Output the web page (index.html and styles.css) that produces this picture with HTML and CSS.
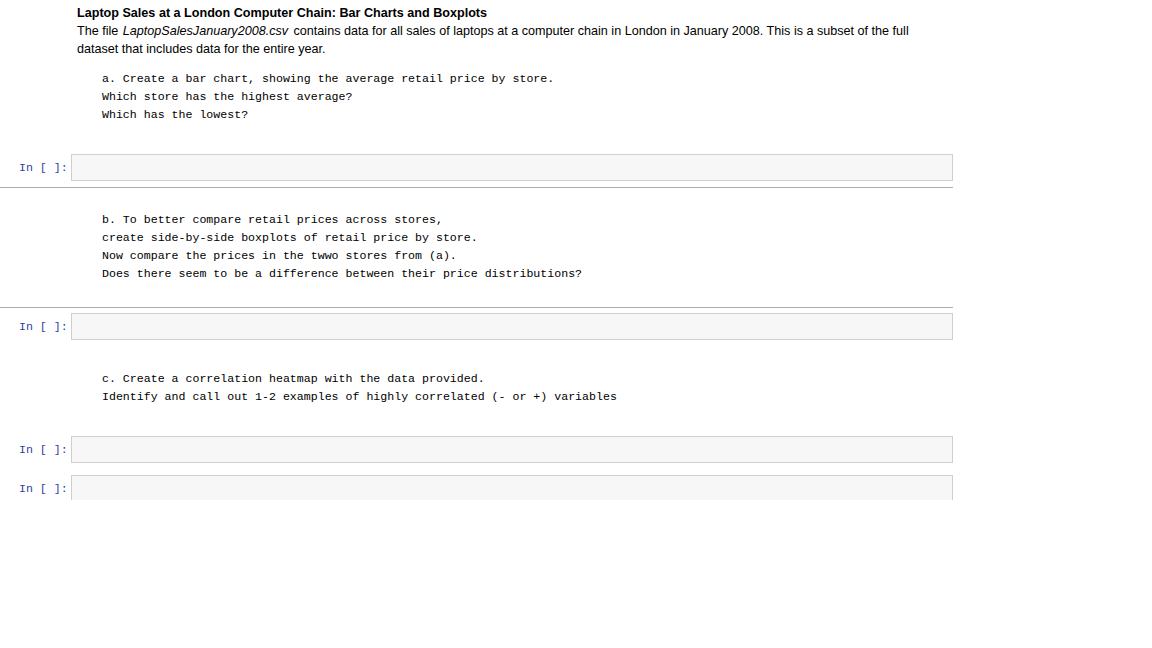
FILE: index.html
```html
<!DOCTYPE html>
<html>
<head>
<meta charset="utf-8">
<link rel="stylesheet" href="styles.css">
</head>
<body>
<div class="nb">
  <div class="md md-a">
    <div class="title">Laptop Sales at a London Computer Chain: Bar Charts and Boxplots</div>
    <p class="desc">The file <em class="fname">LaptopSalesJanuary2008.csv</em> contains data for all sales of laptops at a computer chain in London in January 2008. This is a subset of the full dataset that includes data for the entire year.</p>
    <pre class="task">a. Create a bar chart, showing the average retail price by store.
Which store has the highest average?
Which has the lowest?</pre>
  </div>
  <div class="code code-a"><span class="prompt">In [ ]:</span><div class="input"></div></div>
  <div class="sep sep-a"></div>
  <div class="md md-b">
    <pre class="task">b. To better compare retail prices across stores,
create side-by-side boxplots of retail price by store.
Now compare the prices in the twwo stores from (a).
Does there seem to be a difference between their price distributions?</pre>
  </div>
  <div class="sep sep-b"></div>
  <div class="code code-b"><span class="prompt">In [ ]:</span><div class="input"></div></div>
  <div class="md md-c">
    <pre class="task">c. Create a correlation heatmap with the data provided.
Identify and call out 1-2 examples of highly correlated (- or +) variables</pre>
  </div>
  <div class="code code-c"><span class="prompt">In [ ]:</span><div class="input"></div></div>
  <div class="code code-d"><span class="prompt">In [ ]:</span><div class="input cut"></div></div>
</div>
</body>
</html>
```

FILE: styles.css
```css
html, body {
  margin: 0;
  padding: 0;
  background: #ffffff;
}
.nb {
  width: 953px;
  font-family: "Liberation Sans", Arial, sans-serif;
  color: #000000;
}
.md {
  padding-left: 77px;
}
.md-a {
  padding-top: 4px;
}
.title {
  font-weight: bold;
  font-size: 12.6px;
  line-height: 18px;
}
.desc {
  margin: 0;
  font-size: 12.6px;
  line-height: 18px;
  width: 834px;
}
.fname {
  padding: 0 2px 0 1px;
}
.task {
  margin: 0 0 -1px 0;
  padding: 1px 0 0 25px;
  font-family: "Liberation Mono", "DejaVu Sans Mono", monospace;
  font-size: 11.6px;
  line-height: 18px;
  color: #000000;
}
.md-a .task { margin-top: 11px; }
.md-b { margin-top: 22px; }
.md-c { margin-top: 29px; }
.code {
  display: flex;
  align-items: center;
}
.prompt {
  width: 71px;
  box-sizing: border-box;
  padding-left: 19px;
  font-family: "Liberation Mono", "DejaVu Sans Mono", monospace;
  font-size: 11.6px;
  color: #303f9f;
  white-space: pre;
}
.input {
  flex: 1;
  height: 25px;
  background: #f7f7f7;
  border: 1px solid #cfcfcf;
}
.input.cut {
  height: 24px;
  border-bottom: none;
}
.code-a { margin-top: 31px; }
.code-b { margin-top: 5px; }
.code-c { margin-top: 31px; }
.code-d { margin-top: 12px; }
.code-d .prompt { padding-top: 2px; }
.sep {
  height: 1px;
  background: #ababab;
}
.sep-a { margin-top: 6px; }
.sep-b { margin-top: 25px; }
```
